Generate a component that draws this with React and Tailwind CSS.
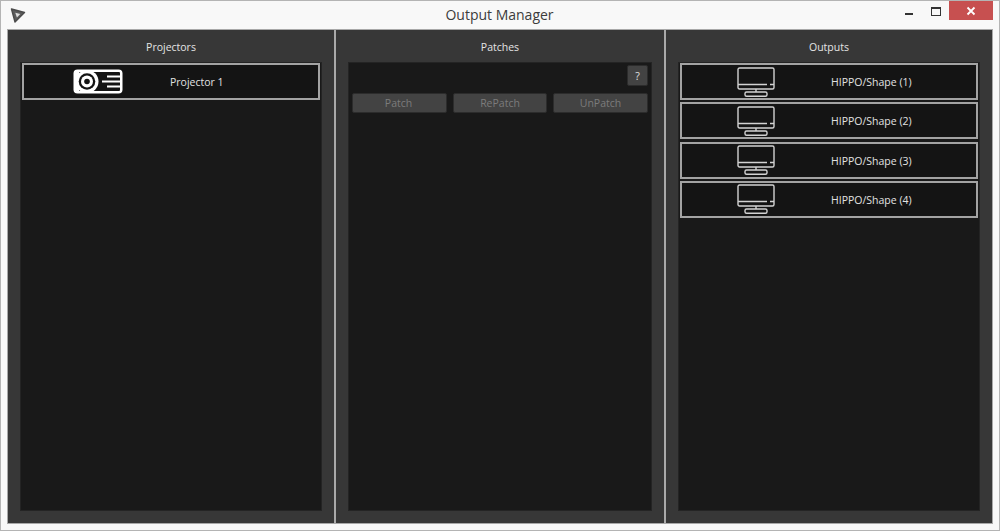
const FONT = { fontFamily: '"Open Sans", "Liberation Sans", Arial, sans-serif' };

function ProjectorIcon() {
  return (
    <svg width="50" height="25" viewBox="0 0 50 25" fill="none">
      <rect x="0.5" y="0.5" width="49" height="24" rx="4" fill="#fff" />
      <rect x="6" y="3" width="41" height="19" rx="1" fill="#141414" />
      <circle cx="14" cy="12.5" r="11.5" fill="#fff" />
      <circle cx="14" cy="12.5" r="8.3" fill="#141414" />
      <circle cx="14" cy="12.5" r="6" fill="#fff" />
      <circle cx="14" cy="12.5" r="2.8" fill="#141414" />
      <path d="M34 7.5h15M29 12.5h20M34 17.5h15" stroke="#fff" strokeWidth="2.2" />
    </svg>
  );
}

function MonitorIcon() {
  return (
    <svg width="38" height="30" viewBox="0 0 38 30" fill="none" stroke="#d2d2d2" strokeWidth="1.4">
      <rect x="1" y="1" width="36" height="21" rx="1.5" />
      <path d="M1 17.5h29M33 17.5h4" strokeWidth="1.6" />
      <path d="M19 22v3" />
      <rect x="8" y="25" width="22" height="4.2" rx="1.5" />
    </svg>
  );
}

function Row({ icon, label, labelClass }) {
  return (
    <div className="flex h-[37px] items-center border-2 border-[#a3a3a3] bg-[#141414]">
      <div className="flex w-[148px] justify-center">{icon}</div>
      <div className={`pt-[3px] text-[10.5px] text-[#e2e2e2] ${labelClass || ''}`}>{label}</div>
    </div>
  );
}

function Panel({ title, className, children }) {
  return (
    <div className={`flex flex-col bg-[#373737] px-[12px] ${className}`}>
      <div className="flex h-[32px] shrink-0 items-center justify-center pt-[3px] text-[10.5px] text-[#e4e4e4]">{title}</div>
      <div className="mb-[12px] flex-1 border border-[#242424] bg-[#191919]">{children}</div>
    </div>
  );
}

function PatchButton({ label, className }) {
  return (
    <div className={`flex h-[20px] items-center justify-center rounded-[2px] border border-[#2c2c2c] bg-[#434343] pt-[2px] text-[10.5px] text-[#7c7c7c] ${className}`}>
      {label}
    </div>
  );
}

export default function App() {
  const outputs = ['HIPPO/Shape (1)', 'HIPPO/Shape (2)', 'HIPPO/Shape (3)', 'HIPPO/Shape (4)'];

  return (
    <div className="flex h-[531px] w-[1000px] flex-col overflow-hidden border border-[#b4b4b4] bg-[#f8f8f8]" style={FONT}>
      {/* Title bar */}
      <div className="flex h-[28px] shrink-0 items-start">
        <div className="flex-1">
          <svg className="ml-[9px] mt-[6px]" width="17" height="17" viewBox="0 0 17 17">
            <path d="M1.5 2l13 3.5L5 15z" fill="#5c5c5c" stroke="#4a4a4a" strokeWidth="1.4" strokeLinejoin="round" />
            <path d="M5.3 5.8l5 1.3-3.4 3.4z" fill="#dcdcdc" />
          </svg>
        </div>
        <div className="pl-[5px] pt-[3px] text-[14px] text-[#3c3c3c]">Output Manager</div>
        <div className="flex flex-1 items-start justify-end pr-[6px]">
          <div className="mr-[18px] mt-[12px] h-[2px] w-[8px] bg-[#333333]" />
          <div className="mr-[8px] mt-[6px] h-[9px] w-[10px] border border-t-2 border-[#333333]" />
          <div className="flex h-[19px] w-[44px] items-center justify-center bg-[#c75050]">
            <svg width="10" height="10" viewBox="0 0 10 10" stroke="#fff" strokeWidth="1.8">
              <path d="M1.5 1.5l7 7M8.5 1.5l-7 7" />
            </svg>
          </div>
        </div>
      </div>

      {/* Panels */}
      <div className="mx-[6px] flex h-[495px] shrink-0 border border-[#a8a8a8]">
        <Panel title="Projectors" className="w-[326px]">
          <div className="px-px">
            <Row icon={<ProjectorIcon />} label="Projector 1" labelClass="-ml-[2px]" />
          </div>
        </Panel>
        <div className="w-[2px] bg-[#a9a9a9]" />
        <Panel title="Patches" className="w-[328px]">
          <div className="flex justify-end pr-[3px] pt-[2px]">
            <div className="flex h-[21px] w-[21px] items-center justify-center rounded-[2px] border border-[#2c2c2c] bg-[#434343] pt-[2px] text-[10.5px] text-[#e0e0e0]">?</div>
          </div>
          <div className="mt-[7px] flex justify-between px-[3px]">
            <PatchButton label="Patch" className="w-[95px] pr-[2px]" />
            <PatchButton label="RePatch" className="w-[94px]" />
            <PatchButton label="UnPatch" className="w-[95px]" />
          </div>
        </Panel>
        <div className="w-[2px] bg-[#a9a9a9]" />
        <Panel title="Outputs" className="w-[326px]">
          <div className="flex flex-col gap-[2.3px] px-px">
            {outputs.map((name) => (
              <Row key={name} icon={<MonitorIcon />} label={name} labelClass="ml-px" />
            ))}
          </div>
        </Panel>
      </div>
    </div>
  );
}
